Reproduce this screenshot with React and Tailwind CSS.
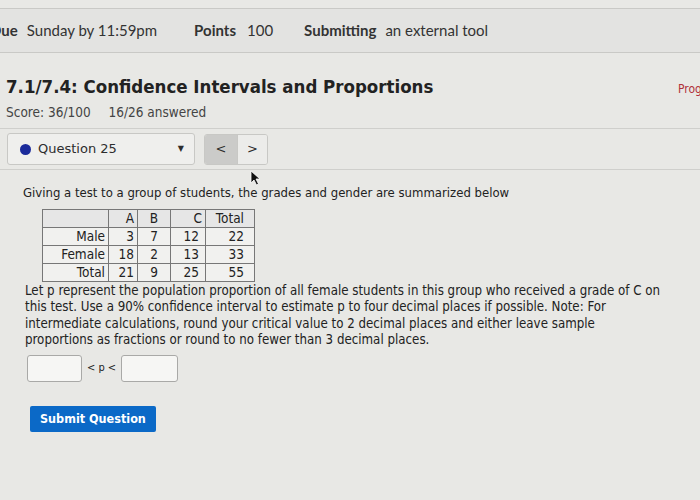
export default function App() {
  const rows = [
    ['Male', '3', '7', '12', '22'],
    ['Female', '18', '2', '13', '33'],
    ['Total', '21', '9', '25', '55'],
  ]
  return (
    <div className="relative h-[500px] w-[700px] overflow-hidden bg-[#e8e8e5] text-[#2d2d2d]">
      {/* assignment header */}
      <div className="mt-[8px] flex h-[45px] items-center border-y border-[#c9c9c6] bg-[#e3e3e1] font-['Lato',sans-serif] text-[15px] text-[#333]">
        <div className="flex gap-[9px]">
          <span className="-ml-[10px] font-bold">Due</span>
          <span>Sunday by 11:59pm</span>
        </div>
        <div className="ml-[37px] flex gap-[11px]">
          <span className="font-bold">Points</span>
          <span>100</span>
        </div>
        <div className="ml-[31px] flex gap-[9px]">
          <span className="font-bold">Submitting</span>
          <span>an external tool</span>
        </div>
      </div>

      <div className="px-[6px] pt-[20px] font-['DejaVu_Sans_Condensed','DejaVu_Sans',sans-serif]">
        <div className="flex items-baseline justify-between">
          <h1 className="text-[18.5px] font-bold text-[#222]">7.1/7.4: Confidence Intervals and Proportions</h1>
          <span className="-mr-[30px] text-[12px] text-[#b0303a]">Progress</span>
        </div>
        <div className="mt-[1px] text-[13.5px] text-[#444]">
          Score: 36/100 <span className="ml-[14px]">16/26 answered</span>
        </div>
      </div>

      <div className="mt-[6px] border-y border-[#cfcfcc] py-[4px] pl-[7px] font-['DejaVu_Sans',sans-serif]">
        <div className="flex items-center gap-[9px]">
          <div className="flex h-[32px] w-[188px] items-center rounded-[3px] border border-[#c8c8c5] bg-[#efefed] pl-[12px] pr-[10px] text-[13px]">
            <span className="h-[11px] w-[11px] rounded-full bg-[#1a2a9a]" />
            <span className="ml-[7px] flex-1">Question 25</span>
            <span className="text-[8px]">▼</span>
          </div>
          <div className="flex h-[31px] overflow-hidden rounded-[3px] border border-[#c8c8c5] text-[13px]">
            <span className="flex w-[32px] items-center justify-center bg-[#cbcbc9]">&lt;</span>
            <span className="flex w-[30px] items-center justify-center border-l border-[#c8c8c5] bg-[#ececea]">&gt;</span>
          </div>
        </div>
      </div>

      <div className="relative pl-[23px] pt-[13px] font-['DejaVu_Sans_Condensed','DejaVu_Sans',sans-serif] text-[13px] text-[#222]">
        <svg className="absolute left-[250px] top-[0px]" width="11" height="16" viewBox="0 0 11 16">
          <path d="M1 1 L1 13 L4 10 L6.5 15 L8.5 14 L6 9 L10 9 Z" fill="#111" stroke="#fff" strokeWidth="0.8" />
        </svg>
        <p>Giving a test to a group of students, the grades and gender are summarized below</p>
        <table className="ml-[19px] mt-[6px] border-collapse border border-[#555] text-[13.5px] leading-[17px]">
          <thead>
            <tr className="bg-[#e6e6e6]">
              <th className="w-[66px] border border-[#777] font-normal"></th>
              <th className="w-[29px] border border-[#777] pr-[3px] text-right font-normal">A</th>
              <th className="w-[33px] border border-[#777] text-center font-normal">B</th>
              <th className="w-[35px] border border-[#777] pr-[3px] text-right font-normal">C</th>
              <th className="w-[49px] border border-[#777] pr-[10px] text-right font-normal">Total</th>
            </tr>
          </thead>
          <tbody>
            {rows.map((r) => (
              <tr key={r[0]} className="bg-[#f1f1ef]">
                <td className="border border-[#777] pr-[3px] text-right">{r[0]}</td>
                <td className="border border-[#777] pr-[3px] text-right">{r[1]}</td>
                <td className="border border-[#777] text-center">{r[2]}</td>
                <td className="border border-[#777] pr-[6px] text-right">{r[3]}</td>
                <td className="border border-[#777] pr-[10px] text-right">{r[4]}</td>
              </tr>
            ))}
          </tbody>
        </table>

        <p className="mt-[1px] whitespace-nowrap pl-[2px] text-[13.2px] leading-[16.5px]">
          Let p represent the population proportion of all female students in this group who received a grade of C on
          <br />
          this test. Use a 90% confidence interval to estimate p to four decimal places if possible. Note: For
          <br />
          intermediate calculations, round your critical value to 2 decimal places and either leave sample
          <br />
          proportions as fractions or round to no fewer than 3 decimal places.
        </p>

        <div className="mt-[6px] flex items-center gap-[5px] pl-[4px]">
          <span className="h-[27px] w-[55px] rounded-[3px] border border-[#a9a9a7] bg-[#f6f6f4]" />
          <span className="text-[11px]">&lt; p &lt;</span>
          <span className="h-[27px] w-[57px] rounded-[3px] border border-[#a9a9a7] bg-[#f6f6f4]" />
        </div>

        <button className="ml-[7px] mt-[24px] rounded-[2px] bg-[#0b69c7] px-[10px] py-[4px] text-[12.5px] font-bold text-white">
          Submit Question
        </button>
      </div>
    </div>
  )
}
